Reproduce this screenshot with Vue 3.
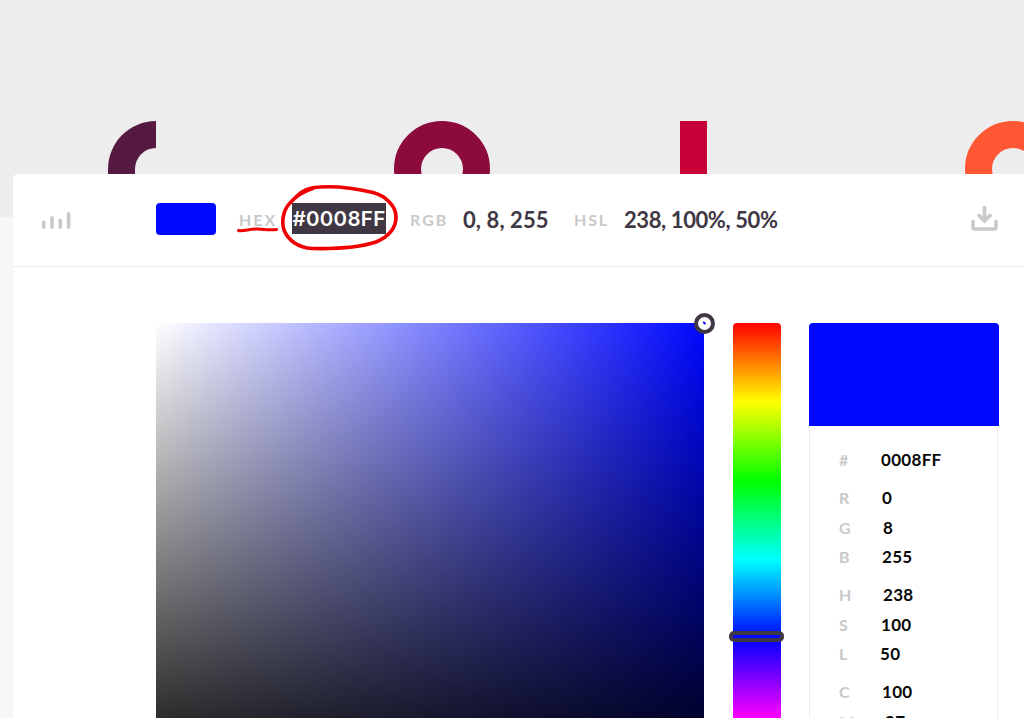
<script setup>
const groups = [
  { cls: 'hex', rows: [{ k: '#', v: '0008FF', x: 0 }] },
  { cls: 'g', rows: [{ k: 'R', v: '0', x: 1 }, { k: 'G', v: '8', x: 2 }, { k: 'B', v: '255', x: 1 }] },
  { cls: 'g', rows: [{ k: 'H', v: '238', x: 2 }, { k: 'S', v: '100', x: 0 }, { k: 'L', v: '50', x: -1 }] },
  { cls: 'g', rows: [{ k: 'C', v: '100', x: 1 }, { k: 'M', v: '97', x: 4 }] },
]
</script>

<template>
  <div class="page">
    <div class="hero">
      <div class="shape quarter"></div>
      <div class="shape ring"></div>
      <div class="shape bar"></div>
      <div class="shape ring orange"></div>
    </div>

    <div class="panel">
      <header class="head">
        <svg class="bars" viewBox="0 0 29 17" width="29" height="17" aria-hidden="true">
          <rect x="0" y="8.500" width="3.600" height="8.500" rx="1.800" />
          <rect x="8.200" y="4" width="3.600" height="13" rx="1.800" />
          <rect x="16.500" y="6.500" width="3.600" height="10.500" rx="1.800" />
          <rect x="24.800" y="0" width="3.600" height="17" rx="1.800" />
        </svg>
        <div class="swatch"></div>
        <span class="label l-hex">HEX</span>
        <span class="val sel">#0008FF</span>
        <span class="label l-rgb">RGB</span>
        <span class="val v-rgb">0, 8, 255</span>
        <span class="label l-hsl">HSL</span>
        <span class="val v-hsl">238, 100%, 50%</span>
        <svg class="dl" viewBox="0 0 27 25" width="27" height="25" aria-hidden="true">
          <path d="M13.500 1.500v13M8 9.500l5.500 5.500L19 9.500" fill="none" stroke="#c9c9c9" stroke-width="3.600" stroke-linecap="round" stroke-linejoin="round" />
          <path d="M2 15.500v5.500a2 2 0 0 0 2 2h19a2 2 0 0 0 2-2v-5.500" fill="none" stroke="#c9c9c9" stroke-width="3.600" stroke-linecap="round" />
        </svg>
        <svg class="marks" viewBox="0 0 180 75" width="180" height="75" aria-hidden="true">
          <path d="M8.500 50.500C14 51.500 20 48.500 28 49C36 49.500 40 50.500 46.500 49.500" fill="none" stroke="#f00000" stroke-width="3" stroke-linecap="round" />
          <path d="M66 17C72 10 80 7 90 7C104 6 124 8 143 12.500C156 16 166 26 166 37C166 47 160 56 146 62C128 68 104 69 82 68.500C68 68 58 60 54 50C51 40 54 29 60 23C66 16 74 11 84 8" fill="none" stroke="#f00000" stroke-width="3.600" stroke-linecap="round" stroke-linejoin="round" />
        </svg>
      </header>

      <main class="body">
        <div class="picker">
          <div class="thumb"><i></i></div>
        </div>
        <div class="hue">
          <div class="hue-thumb"></div>
        </div>
        <aside class="info">
          <div class="preview"></div>
          <div class="list">
            <div v-for="(g, i) in groups" :key="i" class="group" :class="g.cls">
              <div v-for="r in g.rows" :key="r.k" class="row">
                <span class="k">{{ r.k }}</span>
                <span class="v" :style="{ marginLeft: r.x + 'px' }">{{ r.v }}</span>
              </div>
            </div>
          </div>
        </aside>
      </main>
    </div>
  </div>
</template>

<style>
html, body { margin: 0; background: #f7f7f7; overflow: hidden; }
</style>

<style scoped>
.page {
  width: 1024px;
  height: 718px;
  overflow: hidden;
  background: #f7f7f7;
  font-family: Lato, "Liberation Sans", sans-serif;
  color: #3f3844;
}
.hero {
  height: 96px;
  padding-top: 121px;
  background: #ededed;
  display: flex;
  padding-left: 108px;
  overflow: hidden;
}
.shape { flex: none; height: 96px; box-sizing: border-box; }
.quarter {
  width: 48px;
  border-radius: 48px 0 0 0;
  border: solid #561a42;
  border-width: 27px 0 0 27px;
  height: 53px;
  overflow: hidden;
}
.ring {
  width: 96px;
  border-radius: 50%;
  border: 27px solid #8c0b3c;
  margin-left: 238px;
}
.bar {
  width: 27px;
  height: 53px;
  background: #c70039;
  margin-left: 190px;
}
.ring.orange {
  border-color: #ff5733;
  margin-left: 258px;
}
.panel {
  position: relative;
  margin: -43px 0 0 13px;
  width: 1100px;
  background: #fff;
  border-radius: 5px 0 0 0;
  height: 600px;
}
.head {
  position: relative;
  height: 92px;
  border-bottom: 1px solid #ececec;
  display: flex;
  align-items: center;
}
.bars { fill: #c9c9c9; margin-left: 29px; flex: none; margin-top: 1px; }
.swatch {
  width: 60px;
  height: 32px;
  background: #0008ff;
  border-radius: 4px;
  margin-left: 85px;
  margin-bottom: 2px;
  flex: none;
}
.label {
  font-size: 16px;
  font-weight: 700;
  letter-spacing: 2px;
  color: #c9c9c9;
  flex: none;
  margin-bottom: 2px;
}
.l-hex { margin-left: 23px; width: 53px; }
.l-rgb { margin-left: 24px; width: 53px; }
.l-hsl { margin-left: 24px; width: 50px; letter-spacing: 1.800px; }
.val {
  font-size: 22px;
  font-weight: 700;
  flex: none;
  color: #3f3844;
  margin-bottom: 2px;
}
.sel {
  background: #3f3844;
  color: #fff;
  width: 94px;
  height: 31px;
  line-height: 31px;
  font-family: Inter, sans-serif;
  font-size: 20.500px;
  font-weight: 600;
  letter-spacing: 0.300px;
  text-align: center;
  white-space: nowrap;
  margin-bottom: 3px;
}
.v-rgb { width: 87px; letter-spacing: 0.100px; }
.v-hsl { width: 193px; letter-spacing: -0.400px; }
.dl { margin-left: 154px; flex: none; margin-bottom: 3px; }
.marks { position: absolute; left: 217px; top: 6px; pointer-events: none; }
.body {
  display: flex;
  align-items: flex-start;
  padding: 56px 0 0 143px;
}
.picker {
  position: relative;
  width: 548px;
  height: 480px;
  flex: none;
  border-radius: 4px 0 0 0;
  background:
    linear-gradient(to top, #000, rgba(0, 0, 0, 0)),
    linear-gradient(to right, #fff, #0008ff);
}
.thumb {
  position: absolute;
  right: -11px;
  top: -10.500px;
  width: 21px;
  height: 21px;
  box-sizing: border-box;
  border: 4px solid #3f3844;
  border-radius: 50%;
  background: #fff;
  display: flex;
  align-items: center;
  justify-content: center;
}
.thumb i { width: 3px; height: 1.500px; background: #0008ff; transform: rotate(40deg); }
.hue {
  position: relative;
  width: 48px;
  height: 474px;
  flex: none;
  margin-left: 29px;
  border-radius: 4px 4px 0 0;
  background: linear-gradient(to bottom, #f00 0%, #ff0 16.67%, #0f0 33.33%, #0ff 50%, #00f 66.67%, #f0f 83.33%, #f00 100%);
}
.hue-thumb {
  position: absolute;
  left: -4px;
  right: -3px;
  top: 308px;
  height: 11px;
  box-sizing: border-box;
  border: 4px solid #3f3844;
  border-radius: 5px;
}
.info { width: 190px; margin-left: 28px; flex: none; }
.preview { height: 103px; background: #0008ff; border-radius: 4px 4px 0 0; }
.list {
  border: 1px solid #ececec;
  border-top: 0;
  background: #fff;
  padding: 19px 0 60px 29px;
  width: 189px;
  box-sizing: border-box;
  height: 400px;
}
.group { margin-bottom: 9px; }
.group.hex { margin-bottom: 9px; }
.row {
  display: flex;
  align-items: center;
  height: 29.300px;
  font-size: 17px;
  font-weight: 700;
}
.k { width: 42px; color: #c9c9c9; font-size: 16px; flex: none; }
.v { color: #0a0a0a; letter-spacing: 0.300px; }
</style>
